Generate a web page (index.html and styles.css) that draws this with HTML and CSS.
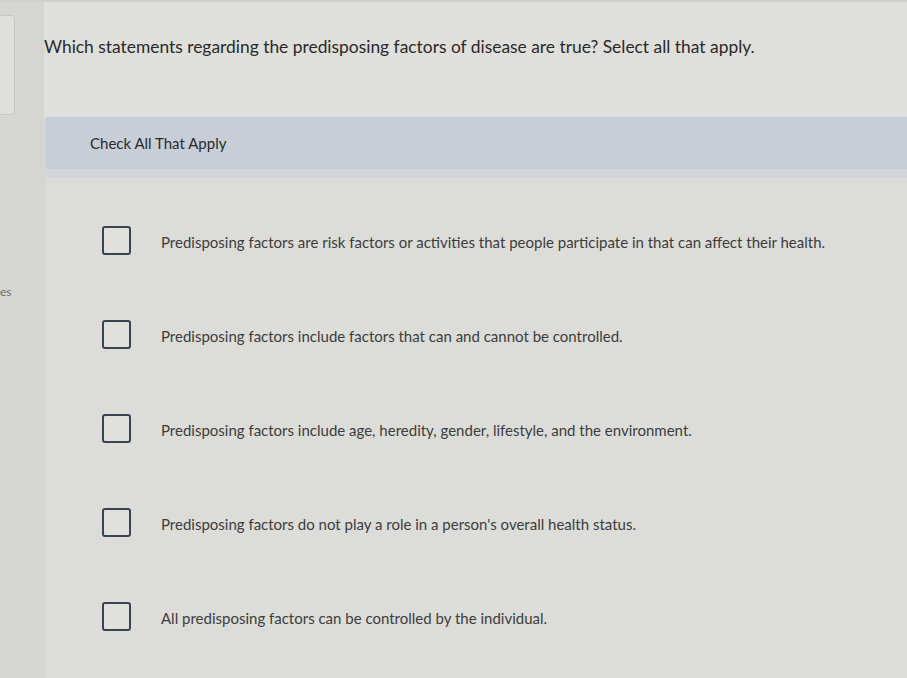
FILE: index.html
```html
<!DOCTYPE html>
<html lang="en">
<head>
<meta charset="utf-8">
<title>Check All That Apply</title>
<link rel="stylesheet" href="styles.css">
</head>
<body>
<aside class="side">
  <div class="side-card"></div>
  <div class="side-label">es</div>
</aside>
<main class="main">
  <h1 class="question">Which statements regarding the predisposing factors of disease are true? Select all that apply.</h1>
  <section class="answers">
    <div class="answers-head">Check All That Apply</div>
    <div class="answers-sub"></div>
    <ul class="options">
      <li class="option"><span class="box"></span><span class="label">Predisposing factors are risk factors or activities that people participate in that can affect their health.</span></li>
      <li class="option"><span class="box"></span><span class="label">Predisposing factors include factors that can and cannot be controlled.</span></li>
      <li class="option"><span class="box"></span><span class="label">Predisposing factors include age, heredity, gender, lifestyle, and the environment.</span></li>
      <li class="option"><span class="box"></span><span class="label">Predisposing factors do not play a role in a person's overall health status.</span></li>
      <li class="option"><span class="box"></span><span class="label">All predisposing factors can be controlled by the individual.</span></li>
    </ul>
  </section>
</main>
</body>
</html>
```
FILE: styles.css
```css
html, body {
  margin: 0;
  padding: 0;
  height: 100%;
}
body {
  display: flex;
  background: #dcdcd8;
  font-family: Lato, "Open Sans", "Liberation Sans", sans-serif;
  color: #2e2e2e;
  overflow: hidden;
}
.side {
  width: 46px;
  flex: none;
  background: #d5d5d1;
  display: flex;
  flex-direction: column;
  border-top: 2px solid #cfcfcb;
}
.side-card {
  width: 14px;
  height: 98px;
  margin-top: 13px;
  background: #dfdfdb;
  border: 1px solid #c9c9c5;
  border-left: none;
  border-radius: 0 4px 4px 0;
}
.side-label {
  margin-top: 169px;
  font-size: 12px;
  color: #6d6d6d;
  margin-left: 0;
}
.main {
  flex: 1;
  display: flex;
  flex-direction: column;
  border-top: 2px solid #cfcfcb;
}
.question {
  margin: 0;
  padding: 34px 0 0 0;
  margin-left: -2px;
  height: 115px;
  box-sizing: border-box;
  font-size: 17.4px;
  font-weight: 400;
  color: #2a2a2a;
  background: #dfdfdb;
}
.answers {
  flex: 1;
  background: #dcddd9;
}
.answers-head {
  height: 52px;
  background: #c7ced7;
  padding-left: 44px;
  display: flex;
  align-items: center;
  font-size: 15px;
  color: #2a2a2a;
}
.answers-sub {
  height: 9px;
  background: #d2d6da;
}
.options {
  list-style: none;
  margin: 0;
  padding: 15px 0 0 0;
}
.option {
  height: 94px;
  display: flex;
  align-items: center;
}
.box {
  width: 29px;
  height: 29px;
  box-sizing: border-box;
  border: 2px solid #3b4352;
  border-radius: 3px;
  background: #e0e0dc;
  margin-left: 56px;
  flex: none;
}
.label {
  margin-left: 30px;
  padding-top: 4px;
  font-size: 15px;
  color: #3c3c3c;
}
```
